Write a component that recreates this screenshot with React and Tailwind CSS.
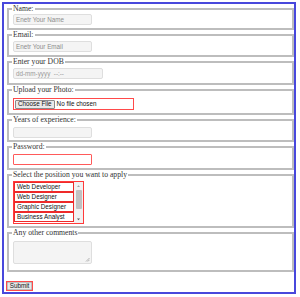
import React from "react";

const legendCls =
  "px-[1px] -ml-[1px] text-[7.7px] leading-[9px] text-[#333] font-['Liberation_Serif',serif]";
const fsCls =
  "block border-2 border-[#bdbdbd] ml-[3px] pl-[4px] pr-[4px]";
const inputCls =
  "block w-[79px] h-[11px] bg-[#f4f4f4] border border-[#dedede] rounded-[2px] px-[2px] text-[6.3px] leading-[9px] text-[#333] placeholder:text-[#8d8d8d] font-['Liberation_Sans',sans-serif] outline-none";

function FS({ legend, h, mt, children }) {
  return (
    <fieldset className={fsCls} style={{ height: h }}>
      <legend className={legendCls}>{legend}</legend>
      <div style={{ marginTop: mt }}>{children}</div>
    </fieldset>
  );
}

export default function App() {
  const options = ["Web Developer", "Web Designer", "Graphic Designer", "Business Analyst"];
  return (
    <div className="w-[300px] h-[297px] bg-white pt-[2px] pl-[2px]">
      <form className="w-[294px] h-[292px] border-2 border-[#4848dc] pt-0">
        <FS legend="Name:" h={26} mt={1}>
          <input className={inputCls} placeholder="Enetr Your Name" />
        </FS>
        <FS legend="Email:" h={27} mt={2}>
          <input className={inputCls} placeholder="Enetr Your Email" />
        </FS>
        <FS legend="Enter your DOB" h={28} mt={2}>
          <div className="w-[90px] h-[11px] bg-[#f4f4f4] border border-[#dedede] rounded-[2px] pl-[2px] flex items-center text-[6.3px] text-[#9a9a9a] whitespace-pre font-['Liberation_Sans',sans-serif]">
            {"dd-mm-yyyy  --:--"}
          </div>
        </FS>
        <FS legend="Upload your Photo:" h={30} mt={4}>
          <div className="w-[121px] h-[12px] border border-[#ff4a4a] bg-white flex items-center pl-[1px] gap-[2px] text-[6.3px] text-[#111] font-['Liberation_Sans',sans-serif]">
            <span className="h-[9px] px-[2px] flex items-center bg-[#e9e9e9] border-[0.5px] border-[#8a8a8a] rounded-[1px]">
              Choose File
            </span>
            <span>No file chosen</span>
          </div>
        </FS>
        <FS legend="Years of experience:" h={27} mt={3}>
          <input className={inputCls} />
        </FS>
        <FS legend="Password:" h={28} mt={3}>
          <input
            type="password"
            className="block w-[79px] h-[11px] bg-white border border-[#ff5a5a] rounded-[1px] px-[2px] outline-none"
          />
        </FS>
        <FS legend="Select the position you want to apply" h={58} mt={2}>
          <div className="w-[71px] h-[43px] border border-[#ff3a3a] flex bg-white">
            <div className="w-[60px] flex flex-col">
              {options.map((o) => (
                <div
                  key={o}
                  className="h-[10px] border border-[#ee2a2a] pl-[2px] flex items-center text-[6.3px] text-[#111] font-['Liberation_Sans',sans-serif] whitespace-nowrap overflow-hidden"
                >
                  {o}
                </div>
              ))}
            </div>
            <div className="w-[9px] bg-[#f1f1f1] flex flex-col items-center">
              <svg width="9" height="8" viewBox="0 0 9 8" className="shrink-0">
                <path d="M3 5 L4.5 3.3 L6 5 Z" fill="#a3a3a3" />
              </svg>
              <div className="w-[6px] h-[19px] bg-[#c1c1c1] rounded-[1px]" />
              <div className="flex-1" />
              <svg width="9" height="7" viewBox="0 0 9 7" className="shrink-0">
                <path d="M3 2.5 L4.5 4.2 L6 2.5 Z" fill="#555" />
              </svg>
            </div>
          </div>
        </FS>
        <FS legend="Any other comments" h={44} mt={4}>
          <div className="relative w-[79px] h-[23px] bg-[#f4f4f4] border border-[#dedede] rounded-[2px]">
            <svg width="5" height="5" viewBox="0 0 5 5" className="absolute right-[1px] bottom-[1px]">
              <path d="M1 4.5 L4.5 1 M2.8 4.5 L4.5 2.8" stroke="#888" strokeWidth="0.6" />
            </svg>
          </div>
        </FS>
        <div className="mt-[9px] ml-[2px]">
          <button
            type="button"
            className="w-[27px] h-[10px] border border-[#ff4a4a] bg-[#e9e9e9] flex items-center justify-center text-[6.3px] text-[#111] font-['Liberation_Sans',sans-serif] shadow-[inset_0_0_0_0.5px_#999]"
          >
            Submit
          </button>
        </div>
      </form>
    </div>
  );
}
